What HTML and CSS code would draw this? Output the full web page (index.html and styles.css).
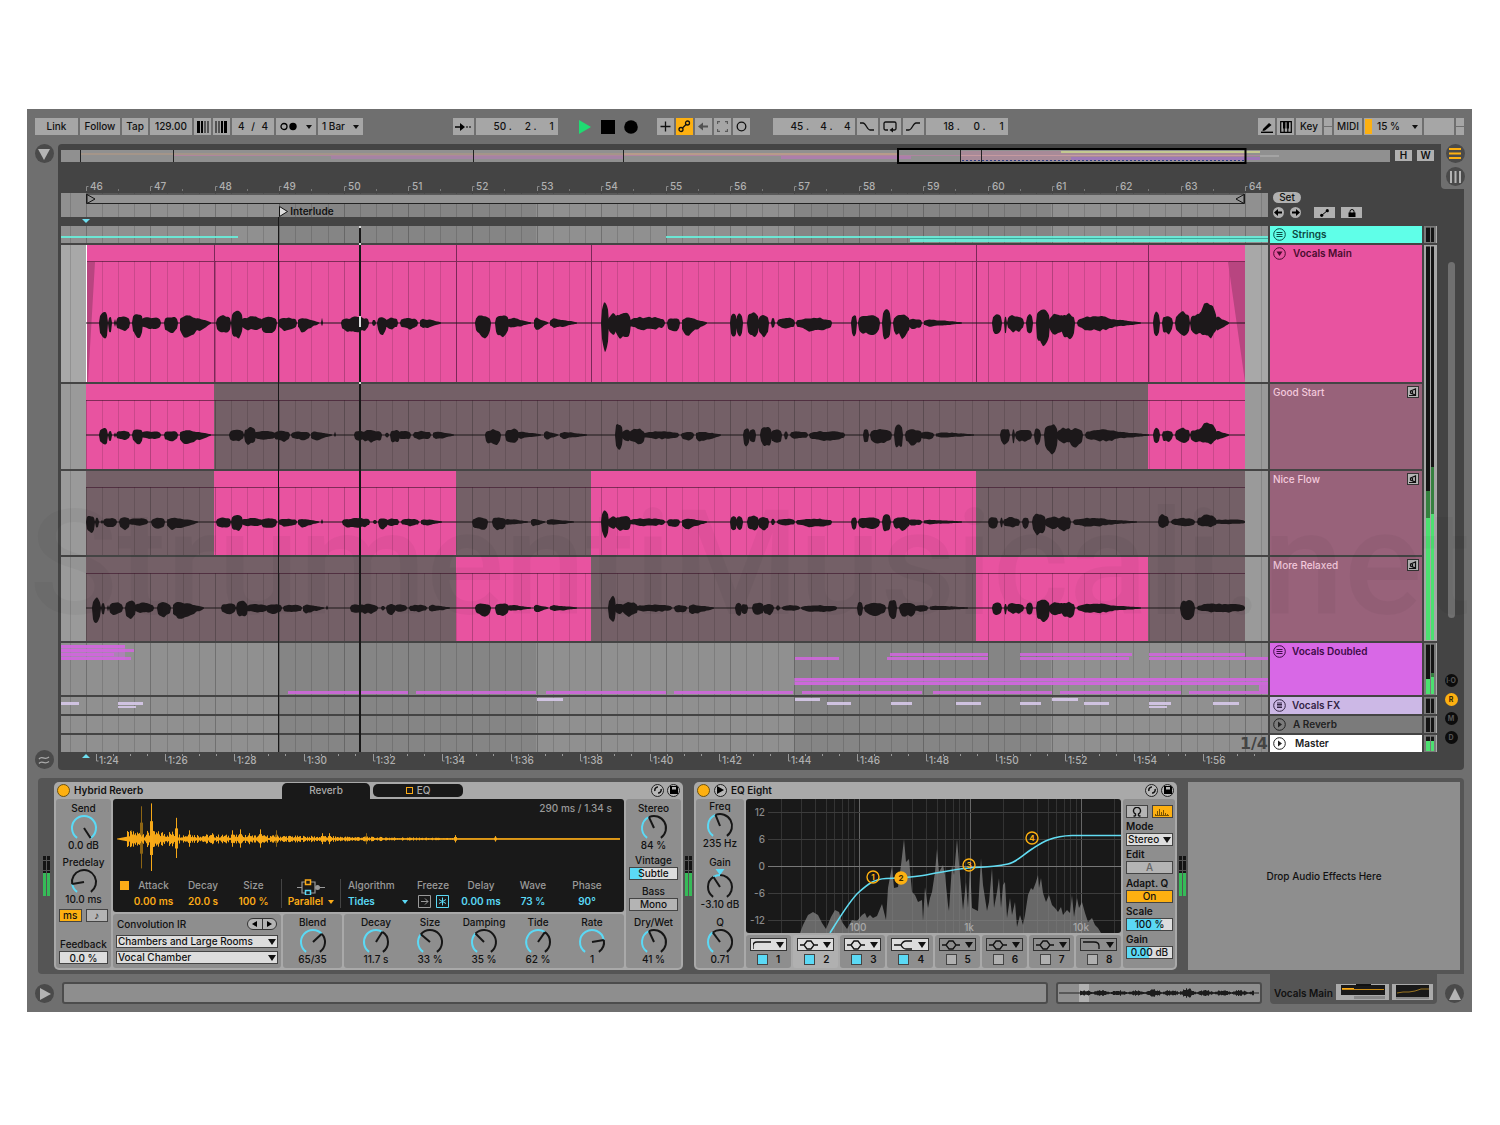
FILE: index.html
```html
<!DOCTYPE html>
<html lang="en">
<head>
<meta charset="utf-8">
<title>Live – Arrangement</title>
<link rel="stylesheet" href="styles.css">
</head>
<body>
<main class="app">
  <header class="toolbar">
    <div class="group">
      <button class="tb w44">Link</button>
      <button class="tb w40">Follow</button>
      <button class="tb w26">Tap</button>
      <button class="tb w42">129.00</button>
      <button class="tb w17" aria-label="Nudge down"><svg width="13" height="12"><path d="M1 0h3v12h-3zM5 0h2v12h-2zM8.500 0h1v12h-1zM11.500 0h1v12h-1z"/></svg></button>
      <button class="tb w17" aria-label="Nudge up"><svg width="13" height="12"><path d="M.5 0h1v12h-1zM3.500 0h1v12h-1zM6 0h2v12h-2zM9 0h3v12h-3z"/></svg></button>
      <button class="tb w42 spread"><span>4</span><span>/</span><span>4</span></button>
      <button class="tb w40 menu" aria-label="Metronome"><svg width="18" height="9"><circle cx="4" cy="4.500" r="3" fill="none" stroke="#000" stroke-width="1.300"/><circle cx="13" cy="4.500" r="3.700"/></svg><i class="caret"></i></button>
      <button class="tb w45 menu">1 Bar<i class="caret"></i></button>
    </div>
    <div class="space-a"></div>
    <div class="group">
      <button class="tb w21" aria-label="Follow playback"><svg width="16" height="10"><path d="M0 5h6" stroke="#000" stroke-width="1.500"/><path d="M5 1l5 4-5 4z"/><path d="M11 5h2M14 5h2" stroke="#000"/></svg></button>
      <button class="tb w82 spread pos"><span>50 .</span><span>2 .</span><span>1</span></button>
      <div class="transport">
        <button aria-label="Play"><svg width="14" height="16"><path d="M1 1l12 7-12 7z" fill="#1fdb72"/></svg></button>
        <button aria-label="Stop"><svg width="14" height="14"><path d="M0 0h14v14H0z"/></svg></button>
        <button aria-label="Record"><svg width="14" height="14"><circle cx="7" cy="7" r="6.800"/></svg></button>
      </div>
      <button class="tb w17" aria-label="Overdub"><svg class="line" width="11" height="11"><path d="M5.500 .5v10M.5 5.500h10"/></svg></button>
      <button class="tb w17 amber" aria-label="Automation arm"><svg class="line" width="13" height="13"><circle cx="3" cy="9.500" r="2"/><circle cx="9.500" cy="3" r="2"/><path d="M4.500 8l3.500-3.500"/></svg></button>
      <button class="tb w17 dim" aria-label="Re-enable automation"><svg width="11" height="9"><path d="M0 4.500l5-4v3h5v2h-5v3z"/></svg></button>
      <button class="tb w17 dim" aria-label="Capture"><svg class="line" width="11" height="11"><path d="M.5 3V.5H3M8 .5h2.500V3M10.500 8v2.500H8M3 10.500H.5V8"/></svg></button>
      <button class="tb w17" aria-label="Session record"><svg class="line" width="11" height="11"><circle cx="5.500" cy="5.500" r="4.300"/></svg></button>
      <div class="space-b"></div>
      <button class="tb w82 spread pos"><span>45 .</span><span>4 .</span><span>4</span></button>
      <button class="tb w21" aria-label="Punch in"><svg class="line" width="14" height="9"><path d="M0 1h3c3 0 4 7 7 7h4"/></svg></button>
      <button class="tb w21" aria-label="Loop"><svg class="line" width="14" height="12"><path d="M5 9H2.500a1.500 1.500 0 0 1-1.500-1.500v-5A1.500 1.500 0 0 1 2.500 1h9A1.500 1.500 0 0 1 13 2.500v5A1.500 1.500 0 0 1 11.500 9H8"/><path d="M10 6.500v5L6.500 9z" fill="#111" stroke="none"/></svg></button>
      <button class="tb w21" aria-label="Punch out"><svg class="line" width="14" height="9"><path d="M0 8h3c3 0 4-7 7-7h4"/></svg></button>
      <button class="tb w82 spread pos"><span>18 .</span><span>0 .</span><span>1</span></button>
    </div>
    <div class="space-c"></div>
    <div class="group">
      <button class="tb w17" aria-label="Draw mode"><svg width="12" height="12"><path d="M2 8l6-6 2.500 2L4 9.500 1.500 10z"/><path d="M0 11.300h12" stroke="#000" stroke-width="1.400"/></svg></button>
      <button class="tb w17" aria-label="Computer keyboard"><svg width="12" height="12"><path d="M.7.700h10.600v10.600H.7zM4.200 0v12M7.800 0v12" fill="none" stroke="#000" stroke-width="1.200"/><path d="M3 0h2.400v7.500H3zM6.600 0H9v7.500H6.600z"/></svg></button>
      <button class="tb w26">Key</button>
      <span class="leds"><i></i><i></i></span>
      <button class="tb w28">MIDI</button>
      <button class="tb w58 cpu"><b></b><span>15 %</span><i class="caret"></i></button>
      <span class="tb w30"></span>
      <span class="leds"><i></i><i></i></span>
    </div>
  </header>

  <div class="workspace">
    <nav class="rail">
      <button class="round" aria-label="Show browser"><svg width="12" height="12"><path d="M0 1h12L6 12z"/></svg></button>
      <button class="round" aria-label="Groove pool"><svg width="12" height="10"><path d="M1 4c3-4 5 2 10-2M1 8.500c3-4 5 2 10-2" fill="none" stroke="#aaa" stroke-width="1.300"/></svg></button>
    </nav>
    <section class="arrangement">
      <div class="overview-row">
        <svg id="overview" class="overview" viewBox="0 0 1329 12" preserveAspectRatio="none"></svg>
        <button class="mini">H</button>
        <button class="mini">W</button>
      </div>
      <div class="view-switch">
        <button class="round on" aria-label="Arrangement view"><svg width="12" height="11"><path d="M0 0h12v2H0zM0 4.500h12v2H0zM0 9h12v2H0z"/></svg></button>
        <button class="round" aria-label="Session view"><svg width="11" height="12"><path d="M0 0h2v12H0zM4.500 0h2v12h-2zM9 0h2v12H9z"/></svg></button>
      </div>
      <div id="bars" class="ruler bars"></div>
      <div class="scrub">
        <svg id="scrub" viewBox="0 0 1207 24" preserveAspectRatio="none"></svg>
        <span class="locator">Interlude</span>
      </div>
      <div class="marks"><i></i></div>
      <div class="set-box">
        <button class="pill">Set</button>
        <div class="set-row">
          <button class="dot" aria-label="Previous locator"><svg width="9" height="7"><path d="M0 3.500L4 0v2.500h4v2H4V7z"/></svg></button>
          <button class="dot" aria-label="Next locator"><svg width="9" height="7"><path d="M9 3.500L5 0v2.500H1v2h4V7z"/></svg></button>
          <button class="flat first" aria-label="Automation mode"><svg width="9" height="8"><path d="M1.500 6.500l6-5" stroke="#000"/><circle cx="1.700" cy="6.300" r="1.600"/><circle cx="7.300" cy="1.700" r="1.600"/></svg></button>
          <button class="flat" aria-label="Lock envelopes"><svg width="8" height="8"><path d="M.5 3.500h7V8h-7z"/><path d="M2 4V2.500a2 2 0 0 1 4 0V4" fill="none" stroke="#000"/></svg></button>
        </div>
      </div>

      <svg class="lane r1" data-lane="strings"></svg>
      <svg class="lane r2" data-lane="main"></svg>
      <svg class="lane r3" data-lane="good"></svg>
      <svg class="lane r4" data-lane="nice"></svg>
      <svg class="lane r5" data-lane="more"></svg>
      <svg class="lane r6" data-lane="doubled"></svg>
      <svg class="lane r7" data-lane="fx"></svg>
      <svg class="lane r8" data-lane="reverb"></svg>
      <svg class="lane r9" data-lane="master"></svg>
      <span class="zoom-grid">1/4</span>
      <div class="cursor insert"></div>
      <div class="cursor play"></div>

      <div class="head r1 strings"><svg class="fold" width="13" height="13"><circle cx="6.500" cy="6.500" r="5.800"/><path d="M3.500 4.500h6M3.500 6.500h6M3.500 8.500h6"/></svg>Strings</div>
      <div class="head r2 vocals"><svg class="fold" width="13" height="13"><circle cx="6.500" cy="6.500" r="5.800"/><path class="solid" d="M3.500 4.500h6l-3 4.500z"/></svg><span>Vocals Main</span></div>
      <div class="head r3 take">Good Start<button aria-label="Audition Good Start"><svg width="8" height="8"><path d="M1.500 3L6.500 1v6L1.500 5zM3.500 2v4M0 7.500h7" fill="none" stroke="#111" stroke-width="1.200"/></svg></button></div>
      <div class="head r4 take">Nice Flow<button aria-label="Audition Nice Flow"><svg width="8" height="8"><path d="M1.500 3L6.500 1v6L1.500 5zM3.500 2v4M0 7.500h7" fill="none" stroke="#111" stroke-width="1.200"/></svg></button></div>
      <div class="head r5 take">More Relaxed<button aria-label="Audition More Relaxed"><svg width="8" height="8"><path d="M1.500 3L6.500 1v6L1.500 5zM3.500 2v4M0 7.500h7" fill="none" stroke="#111" stroke-width="1.200"/></svg></button></div>
      <div class="head r6 doubled"><svg class="fold" width="13" height="13"><circle cx="6.500" cy="6.500" r="5.800"/><path d="M3.500 4.500h6M3.500 6.500h6M3.500 8.500h6"/></svg>Vocals Doubled</div>
      <div class="head r7 fx"><svg class="fold" width="13" height="13"><circle cx="6.500" cy="6.500" r="5.800"/><path d="M4 4h5M4 5.500h5M4 7h5M4 8.500h5"/></svg>Vocals FX</div>
      <div class="head r8 ret"><svg class="fold" width="13" height="13"><circle cx="6.500" cy="6.500" r="5.800"/><path class="solid" d="M5 3.500v6l4-3z"/></svg><span>A Reverb</span></div>
      <div class="head r9 master"><svg class="fold" width="13" height="13"><circle cx="6.500" cy="6.500" r="5.800"/><path class="solid" d="M5 3.500v6l4-3z"/></svg><span>Master</span></div>

      <div class="meter r1"><i></i><i></i></div>
      <div class="meter comp"><i><u style="height:38%"></u><b style="height:31%"></b></i><i><u style="height:44%"></u><b style="height:32%"></b></i></div>
      <div class="meter r6"><i><b style="height:30%"></b></i><i><u style="height:42%"></u><b style="height:34%"></b></i></div>
      <div class="meter r7"><i></i><i></i></div>
      <div class="meter r8"><i></i><i></i></div>
      <div class="meter r9"><i><b style="height:70%"></b></i><i><b style="height:70%"></b></i></div>

      <div class="side">
        <div class="scrollbar"></div>
        <button>I·O</button>
        <button class="lit">R</button>
        <button>M</button>
        <button>D</button>
      </div>
      <div id="times" class="ruler times"></div>
    </section>
  </div>

  <section class="chain">
    <div class="level"><i></i><i></i></div>

    <article class="device reverb">
      <header class="title">
        <button class="power" aria-label="Device on"></button>
        <h2>Hybrid Reverb</h2>
        <button class="tab current">Reverb</button>
        <button class="tab other"><i></i>EQ</button>
        <span class="tools">
          <button class="ring" aria-label="Hot swap"><svg width="8" height="8"><path d="M1 5A3 3 0 0 1 4 1M7 3A3 3 0 0 1 4 7" fill="none" stroke="#111" stroke-width="1.500"/></svg></button>
          <button class="ring" aria-label="Save preset"><svg width="8" height="8"><path fill-rule="evenodd" d="M0 0h7l1 1v7H0zM2 1v2.500h4V1z"/></svg></button>
        </span>
      </header>
      <div class="card col-left">
        <div class="knob" data-label="Send" data-angle="147" data-value="0.0 dB"></div>
        <div class="knob-group">
          <div class="knob" data-label="Predelay" data-angle="-100" data-value="10.0 ms"></div>
          <div class="pair"><button class="box amber">ms</button><button class="box">♪</button></div>
        </div>
        <label class="field">Feedback<input value="0.0 %"></label>
      </div>
      <div class="screen">
        <span class="decay-info">290 ms / 1.34 s</span>
        <svg id="impulse" class="impulse" viewBox="0 0 503 78" preserveAspectRatio="none"></svg>
        <div class="params">
          <i class="sq"></i>
          <div><span>Attack</span><b>0.00 ms</b></div>
          <div><span>Decay</span><b>20.0 s</b></div>
          <div><span>Size</span><b>100 %</b></div>
          <div class="routing"><svg width="30" height="17"><path d="M1 8.500h5M6 3v11h13V3zM19 8.500h10" fill="none" stroke="#999" stroke-width="1.200"/><circle cx="21.500" cy="8.500" r="2.500" fill="#999"/><path d="M9.500 1h5v4.500h-5z" fill="#191919" stroke="#fbab17" stroke-width="1.500"/><path d="M9.500 11.500h5V16h-5z" fill="#191919" stroke="#5bd9f5" stroke-width="1.500"/></svg><b>Parallel <i class="caret"></i></b></div>
          <div class="algo"><span>Algorithm</span><b>Tides <i class="caret"></i></b></div>
          <div class="blue"><span>Freeze</span><b class="icons"><svg width="13" height="13"><path d="M.5.500h12v12H.5zM3 6.500h7M7 3.500l3 3-3 3" fill="none" stroke="#999"/></svg><svg width="13" height="13"><path d="M.5.500h12v12H.5zM6.500 2.500v8M3 4.500l7 4M10 4.500l-7 4" fill="none" stroke="#5bd9f5"/></svg></b></div>
          <div class="blue"><span>Delay</span><b>0.00 ms</b></div>
          <div class="blue"><span>Wave</span><b>73 %</b></div>
          <div class="blue"><span>Phase</span><b>90°</b></div>
        </div>
      </div>
      <div class="lower">
        <div class="card ir">
          <div class="ir-head"><span>Convolution IR</span><span class="stepper"><button aria-label="Previous"><svg width="5" height="6"><path d="M5 0v6L0 3z"/></svg></button><button aria-label="Next"><svg width="5" height="6"><path d="M0 0v6l5-3z"/></svg></button></span></div>
          <div class="select"><select aria-label="Category"><option>Chambers and Large Rooms</option></select></div>
          <div class="select"><select aria-label="Impulse"><option>Vocal Chamber</option></select></div>
        </div>
        <div class="card blend"><div class="knob" data-label="Blend" data-angle="47" data-value="65/35"></div></div>
        <div class="card algo-knobs">
          <div class="knob" data-label="Decay" data-angle="32" data-value="11.7 s"></div>
          <div class="knob" data-label="Size" data-angle="-50" data-value="33 %"></div>
          <div class="knob" data-label="Damping" data-angle="-45" data-value="35 %"></div>
          <div class="knob" data-label="Tide" data-angle="35" data-value="62 %"></div>
          <div class="knob" data-label="Rate" data-angle="80" data-value="1"></div>
        </div>
      </div>
      <div class="card col-right">
        <div class="knob" data-label="Stereo" data-angle="-25" data-value="84 %"></div>
        <div class="opts">
          <div class="opt"><span>Vintage</span><button class="box subtle">Subtle</button></div>
          <div class="opt"><span>Bass</span><button class="box">Mono</button></div>
        </div>
        <div class="knob" data-label="Dry/Wet" data-angle="-25" data-value="41 %"></div>
      </div>
    </article>

    <div class="level"><i></i><i></i></div>

    <article class="device eq">
      <header class="title">
        <button class="power" aria-label="Device on"></button>
        <button class="ring" aria-label="Expand"><svg width="7" height="8"><path d="M0 0l7 4-7 4z"/></svg></button>
        <h2>EQ Eight</h2>
        <span class="tools">
          <button class="ring" aria-label="Hot swap"><svg width="8" height="8"><path d="M1 5A3 3 0 0 1 4 1M7 3A3 3 0 0 1 4 7" fill="none" stroke="#111" stroke-width="1.500"/></svg></button>
          <button class="ring" aria-label="Save preset"><svg width="8" height="8"><path fill-rule="evenodd" d="M0 0h7l1 1v7H0zM2 1v2.500h4V1z"/></svg></button>
        </span>
      </header>
      <div class="card col-left">
        <div class="knob" data-label="Freq" data-angle="-22" data-value="235 Hz"></div>
        <div class="knob bipolar" data-label="Gain" data-angle="-33" data-value="-3.10 dB"></div>
        <div class="knob" data-label="Q" data-angle="-37" data-value="0.71"></div>
      </div>
      <svg id="eq" class="screen eq-screen" viewBox="0 0 375 134"></svg>
      <div id="bands" class="bands"></div>
      <div class="card col-right">
        <div class="pair"><button class="box" aria-label="Audition"><svg class="line" width="10" height="10"><path d="M3.500 9V7A3.500 3.500 0 1 1 6.500 7V9M1.500 9h2M6.500 9h2" stroke-width="1.400"/></svg></button><button class="box amber" aria-label="Analyzer"><svg width="14" height="8"><path d="M0 8V6h1v2zM2 8V3h1v5zM4 8V1h1v7zM6 8V4h1v4zM8 8V2h1v6zM10 8V5h1v3zM12 8V6h1v2zM0 7h14v1H0z" fill="#7a5200"/></svg></button></div>
        <label class="opt">Mode<span class="select"><select><option>Stereo</option></select></span></label>
        <div class="opt"><span>Edit</span><button class="box off">A</button></div>
        <div class="opt"><span>Adapt. Q</span><button class="box amber">On</button></div>
        <label class="opt">Scale<input class="fill78" value="100 %"></label>
        <label class="opt">Gain<input class="fill50" value="0.00 dB"></label>
      </div>
    </article>

    <div class="level"><i></i><i></i></div>
    <div class="drop">Drop Audio Effects Here</div>
  </section>

  <footer class="status">
    <button class="round" aria-label="Show help"><svg width="12" height="12"><path d="M1 0v12l11-6z"/></svg></button>
    <div class="info"></div>
    <svg id="clipview" class="clipview" viewBox="0 0 202 17" preserveAspectRatio="none"></svg>
    <div class="track-tab"><span>Vocals Main</span>
      <svg width="54" height="16"><path d="M0 0h54v16H0z" fill="#aaa"/><path d="M5 1h44v10H5z" fill="#191919"/><path d="M20 0h15v2H20z" fill="#111"/><path d="M6 5.500h42" stroke="#c98a14"/><path d="M6 4.500h12" stroke="#fbab17"/><path d="M18 12h31v3H18z" fill="#888"/></svg>
      <svg width="42" height="16"><path d="M0 0h42v16H0z" fill="#aaa"/><path d="M4 1h33v12H4z" fill="#191919"/><path d="M5 9l6-1 6 0 6-1 6-2 8 0" fill="none" stroke="#9a7420"/><path d="M4 14h33" stroke="#666"/></svg>
    </div>
    <button class="round" aria-label="Hide detail"><svg width="12" height="12"><path d="M6 0l6 12H0z"/></svg></button>
  </footer>
</main>
<div class="watermark" aria-hidden="true">StrumentiMusicali.net</div>
<script src="script.js"></script>
</body>
</html>
```

FILE: styles.css
```css
* { box-sizing: border-box; }
body {
  margin: 0;
  padding: 109px 28px 113px 27px;
  position: relative;
  background: #fff;
  color: #111;
  font: 500 10px/13px Inter, "Liberation Sans", sans-serif;
}
button, input, select {
  margin: 0; padding: 0; border: 0; border-radius: 0;
  font: inherit; color: inherit; background: none;
}
h2 { margin: 0; font: inherit; font-weight: 600; }
svg { display: block; }
svg.line { fill: none; stroke: #111; stroke-width: 1.3; }
.caret { border: 3px solid transparent; border-top: 4px solid currentColor; border-bottom: 0; width: 0; flex: none; }

.app { background: #6f6f6f; min-width: 1380px; }

/* control bar */
.toolbar { display: flex; height: 35px; padding: 9px 8px; }
.group { display: flex; gap: 2px; }
.space-a { flex: 89; }
.space-c { flex: 249; }
.space-b { width: 19px; }
.tb { height: 17px; background: #a6a6a6; display: flex; align-items: center; justify-content: center; white-space: nowrap; }
.w17 { width: 17px; } .w21 { width: 21px; } .w26 { width: 26px; } .w28 { width: 28px; } .w30 { width: 30px; }
.w40 { width: 40px; } .w42 { width: 42px; } .w44 { width: 43px; } .w45 { width: 45px; } .w58 { width: 58px; } .w82 { width: 82px; }
.spread { justify-content: space-between; padding: 0 6px; }
.pos { padding: 0 4px 0 18px; }
.menu { justify-content: space-between; padding: 0 4px; }
.amber { background: #fdb011; }
.dim svg { opacity: .5; }
.transport { display: flex; align-items: center; gap: 9px; margin: 0 17px 0 18px; }
.leds { display: flex; flex-direction: column; gap: 1px; width: 8px; height: 17px; }
.leds i { flex: 1; background: #a6a6a6; }
.cpu { justify-content: flex-start; gap: 5px; padding: 0 4px 0 1px; }
.cpu b { width: 7px; height: 15px; background: #fdb011; }
.cpu .caret { margin-left: auto; }

/* arrangement */
.workspace { display: flex; padding-right: 8px; }
.rail { width: 31px; display: flex; flex-direction: column; align-items: center; justify-content: space-between; padding: 0 0 1px 3px; }
.round { width: 19px; height: 19px; border-radius: 50%; background: #4a4a4a; display: flex; align-items: center; justify-content: center; fill: #b4b4b4; flex: none; }
.round.on { fill: #fdb011; }
.arrangement {
  flex: 1; min-width: 0; position: relative;
  display: grid; gap: 2px;
  grid-template-columns: minmax(0, 1fr) 152px 13px 25px;
  grid-template-rows: 19px 26px 24px 5px 17px 137px 85px 84px 84px 52px 17px 17px 17px 16px;
  padding-left: 3px; background: #444; border-radius: 4px 0 4px 4px;
}
.overview-row { grid-area: 1 / 1 / 2 / 4; display: flex; gap: 5px; padding: 6px 3px 0 0; align-items: flex-start; }
.overview { flex: 1; min-width: 0; height: 12px; overflow: visible; }
.mini { width: 17px; height: 11px; background: #b0b0b0; line-height: 11px; font-weight: 600; }
.view-switch { grid-area: 1 / 4 / 3 / 5; margin-left: 2px; height: 45px; background: #6f6f6f; border-bottom-left-radius: 4px; display: flex; flex-direction: column; align-items: center; gap: 4px; padding-left: 5px; }
.ruler { position: relative; color: #b0b0b0; }
.ruler svg { position: absolute; inset: 0; width: 100%; height: 100%; }
.ruler span { position: absolute; white-space: nowrap; }
.bars { grid-area: 2 / 1; }
.bars span { top: 15px; margin-left: 4px; }
.times { grid-area: 14 / 1; }
.times span { top: 0; margin-left: 3px; }
.scrub { grid-area: 3 / 1; position: relative; }
.scrub svg { width: 100%; height: 24px; }
.locator { position: absolute; left: 19%; top: 12px; font-weight: 600; }
.marks { grid-area: 4 / 1; padding-left: 2%; }
.marks i { display: block; width: 0; margin-left: -3px; border: 4px solid transparent; border-top: 4px solid #6fdff0; border-bottom: 0; }
.set-box { grid-area: 3 / 2 / 5 / 3; padding-left: 3px; }
.pill { display: block; width: 28px; height: 11px; margin-top: -1px; border-radius: 6px; background: #b0b0b0; line-height: 11px; }
.set-row { display: flex; gap: 6px; margin-top: 4px; align-items: center; }
.dot, .flat { height: 11px; background: #b0b0b0; display: flex; align-items: center; justify-content: center; }
.dot { width: 11px; border-radius: 50%; }
.flat { width: 21px; }
.flat.first { margin-left: 7px; }

.lane { grid-column: 1; width: 100%; height: 100%; min-width: 0; }
.r1 { grid-row: 5; } .r2 { grid-row: 6; } .r3 { grid-row: 7; } .r4 { grid-row: 8; } .r5 { grid-row: 9; }
.r6 { grid-row: 10; } .r7 { grid-row: 11; } .r8 { grid-row: 12; } .r9 { grid-row: 13; }
.zoom-grid { grid-area: 13 / 1; justify-self: end; font: 700 16px/17px "DejaVu Sans", sans-serif; color: #444; }
.cursor { grid-column: 1; width: 2px; background: #181818; }
.insert { grid-row: 3 / 14; margin: 12px 0 0 18%; width: 1px; }
.play { grid-row: 5 / 14; margin-left: 24.7%; background: linear-gradient(#ddd 0 2px, #181818 2px 17px, #ddd 17px 19px, #181818 19px 90px, #ddd 90px 101px, #181818 101px 156px, #ddd 156px 158px, #181818 158px); }

.head { grid-column: 2; display: flex; align-items: flex-start; gap: 6px; padding: 2px 3px; font-weight: 600; color: #222; }
.fold { fill: none; stroke: currentColor; flex: none; }
.fold .solid { fill: currentColor; stroke: none; }
.strings { background: #5fffe8; color: #0c4a44; }
.vocals { background: #e853a0; color: #4a0c2e; }
.take { background: #98627a; color: #f3c9dc; justify-content: space-between; font-weight: 500; line-height: 12px; }
.take button { width: 12px; height: 12px; background: #b4b4b4; border: 1px solid #333; display: flex; align-items: center; justify-content: center; }
.doubled { background: #d868e6; color: #3d0c46; }
.fx { background: #ccb8e6; color: #332444; }
.ret { background: #7b7b7b; }
.master { background: #fff; }
.head span { padding-left: 1px; }
.master span { padding-left: 3px; }

.meter { grid-column: 3; display: flex; gap: 1px; padding: 1px 2px; background: #7a7a7a; border-right: 1px solid #aaa; }
.meter i { flex: 1; background: #141414; position: relative; border-top: 1px solid #555; }
.meter b, .meter u { position: absolute; left: 0; right: 0; bottom: 0; }
.meter u { background: #35803f; }
.meter b { background: #4ce070; }
.comp { grid-row: 6 / 10; background: #a6a6a6; }
.side { grid-area: 5 / 4 / 14 / 5; display: flex; flex-direction: column; align-items: center; gap: 6px; padding: 36px 1px 8px 0; }
.scrollbar { width: 7px; flex: 1; margin-bottom: 50px; border-radius: 4px; background: #707070; }
.side button { width: 13px; height: 13px; border-radius: 50%; background: #0c0c0c; color: #555; font-size: 7px; line-height: 13px; font-weight: 700; }
.side .lit { background: #fdb011; color: #3a2800; }

/* device chain */
.chain { display: grid; grid-template-columns: 16px 629px 11px 483px 11px minmax(0, 1fr); margin: 8px 8px 0 11px; padding: 4px 4px 4px 0; background: #555; border-radius: 4px 4px 0 4px; }
.level { display: flex; gap: 1px; justify-content: center; padding-top: 74px; }
.level i { width: 3px; height: 40px; background: linear-gradient(#141414 4px, #555 4px 5px, #141414 5px 14px, #555 14px 15px, #141414 15px 17px, #36bb58 17px); }
.device { display: grid; height: 188px; padding: 0 2px 2px; gap: 2px; border-radius: 5px; background: #a9a9a9; }
.reverb { grid-template: 15px 113px 54px / 55px 511px 55px; }
.eq { grid-template: 15px 134px 33px / 48px 375px minmax(0, 1fr); }
.title { grid-column: 1 / -1; display: flex; align-items: center; gap: 4px; padding: 1px 0 0 1px; }
.power { width: 13px; height: 13px; border-radius: 50%; background: #fdb011; border: 1px solid #6a5010; }
.title h2 { width: 207px; }
.eq .title h2 { width: auto; }
.tab { border-radius: 5px; background: #191919; color: #aaa; display: flex; gap: 4px; align-items: center; justify-content: center; align-self: flex-start; height: 13px; }
.current { width: 88px; height: 16px; padding-bottom: 2px; border-radius: 5px 5px 0 0; margin-left: -3px; }
.other { width: 90px; margin-left: -1px; margin-top: 1px; }
.other i { width: 7px; height: 7px; border: 1px solid #fbab17; }
.tools { margin-left: auto; display: flex; gap: 3px; padding-right: 1px; }
.ring { width: 13px; height: 13px; border-radius: 50%; border: 1px solid #222; background: #b8b8b8; display: flex; align-items: center; justify-content: center; }
.card { background: #8e8e8e; border-radius: 3px; text-align: center; }
.col-left { grid-column: 1; grid-row: 2 / 4; display: flex; flex-direction: column; justify-content: space-between; padding: 3px 3px 4px; }
.col-right { grid-column: 3; grid-row: 2 / 4; display: flex; flex-direction: column; justify-content: space-between; padding: 3px 3px 2px; }
.knob { display: flex; flex-direction: column; align-items: center; white-space: nowrap; }
.dial { position: relative; width: 28px; height: 24px; }
.dial svg { overflow: visible; }
.dial input { position: absolute; inset: 0; width: 28px; height: 24px; opacity: 0; }
.bipolar .dial { margin-top: 5px; }
.box, .field input, .opt input, .select select {
  display: flex; align-items: center; justify-content: center;
  height: 13px; width: 100%; border: 1px solid #444; background: #b4b4b4; text-align: center; line-height: 11px;
}
.amber.box { background: #fdb011; }
.pair { display: flex; gap: 4px; }
.knob-group .pair { margin: 3px 0 12px; }
.field input { display: block; background: #ddd; }
.opt, .opt span { display: block; }
.opts { display: grid; gap: 5px; padding-bottom: 3px; }
.subtle { background: linear-gradient(90deg, #5bd9f5 25%, #ddd 25%); }
.box.off { color: #666; }
.select { position: relative; display: block; }
.select select { appearance: none; display: block; background: #ddd; text-align: left; padding: 0 1px; }
.select::after { content: ""; position: absolute; right: 2px; top: 4px; border: 4px solid transparent; border-top: 6px solid #111; border-bottom: 0; pointer-events: none; }
.screen { background: #191919; border-radius: 3px; color: #9a9a9a; }
.reverb > .screen { grid-column: 2; grid-row: 2; padding: 2px 4px 0; display: flex; flex-direction: column; position: relative; }
.decay-info { position: absolute; right: 12px; top: 3px; }
.impulse { width: 100%; height: 75px; }
.params { display: grid; grid-template-columns: 9px 49px 50px 51px 62px 69px 46px 50px 54px 54px; margin: 3px -4px 0 3px; height: 31px; }
.params div { display: flex; flex-direction: column; align-items: center; justify-content: space-between; height: 29px; white-space: nowrap; }
.params b { color: #fbab17; font-weight: 600; display: flex; align-items: center; gap: 5px; }
.params .blue b, .algo b { color: #5bd9f5; }
.params .routing { border: solid #444; border-width: 0 1px; margin-left: 2px; }
.params .algo { align-items: stretch; padding: 0 2px 0 7px; }
.algo b { justify-content: space-between; }
.params .algo .caret { margin-right: 0; }
.params .icons { height: 13px; }
.sq { width: 9px; height: 9px; background: #fbab17; margin-top: 2px; }
.lower { grid-column: 2; grid-row: 3; display: grid; grid-template-columns: 168px 59px 1fr; gap: 2px; }
.lower .card { padding: 2px 0; }
.lower .ir { padding: 4px 3px; text-align: left; display: flex; flex-direction: column; justify-content: space-between; }
.ir-head { display: flex; justify-content: space-between; padding: 0 1px; }
.stepper { display: flex; width: 30px; height: 12px; border: 1px solid #333; border-radius: 6px; background: #b4b4b4; }
.stepper button { flex: 1; display: flex; align-items: center; justify-content: center; }
.stepper button + button { border-left: 1px solid #333; }
.algo-knobs { display: grid; grid-template-columns: repeat(5, 54px); justify-content: center; }
.eq .col-left { padding: 1px 0 2px; }
.eq .col-right { padding: 6px 2px 9px 3px; text-align: left; font-weight: 600; }
.eq .col-right .box, .eq .col-right input, .eq .col-right select { font-weight: 500; }
.opt .fill78 { background: linear-gradient(90deg, #5bd9f5 75%, #ddd 75%); }
.opt .fill50 { background: linear-gradient(90deg, #5bd9f5 50%, #ddd 50%); }
.eq-screen { grid-column: 2; grid-row: 2; width: 375px; height: 134px; font-size: 10px; }
.bands { grid-column: 2; grid-row: 3; display: grid; grid-template-columns: repeat(8, 1fr); gap: 2px; }
.band { background: #8e8e8e; border-radius: 3px; padding: 3px 4px 2px; display: flex; flex-direction: column; justify-content: space-between; }
.band.sel { background: #b0b0b0; }
.band button { height: 13px; border: 1px solid #333; background: #ddd; display: flex; align-items: center; justify-content: space-between; padding: 0 2px; }
.band.off button { background: #8e8e8e; }
.band label { display: flex; gap: 8px; padding-left: 7px; align-items: center; font-weight: 600; }
.band input { appearance: none; width: 11px; height: 11px; border: 1px solid #444; background: #b0b0b0; }
.band input:checked { background: #5bd9f5; }
.band .caret { border-width: 6px 4px 0; }
.drop { background: #8e8e8e; display: flex; align-items: center; justify-content: center; }

/* status bar */
.status { display: flex; align-items: flex-start; gap: 8px; height: 38px; padding: 0 8px; }
.status .round { margin-top: 10px; }
.info, .clipview { height: 22px; margin-top: 8px; border: 2px solid #4c4c4c; border-radius: 3px; background: #8e8e8e; }
.info { flex: 1; }
.clipview { width: 206px; }
.track-tab { display: flex; align-items: flex-end; gap: 3px; width: 167px; height: 30px; padding: 0 4px 4px; background: #555; border-radius: 0 0 4px 4px; font-weight: 600; white-space: nowrap; }
.track-tab span { flex: 1; }

.watermark { position: absolute; left: 0; right: 0; top: 490px; height: 150px; overflow: hidden; text-align: center; font: 500 146px/150px Roboto, sans-serif; color: rgba(0, 0, 0, .035); white-space: nowrap; pointer-events: none; }
```

FILE: script.js
```js
const BAR = 64.4, START = 25, END = 1184, WIDTH = 1207;

// Repeatable noise so that the waveforms keep their shape between loads.
const noise = n => { const s = Math.sin(n * 12.9898) * 43758.5453; return s - Math.floor(s); };
const smooth = n => { const k = Math.floor(n / 3), f = n / 3 - k; return noise(k) * (1 - f) + noise(k + 1) * f; };

// Sung phrases: [from, to, peak above, peak below, decays]
const phrases = {
  a: [[38,47,13,19],[47,51,7,10],[53,55,4,4],[55,69,7,9],[71,82,9,16],[80,100,6,6],[103,117,7,11],[119,150,10,18,1]],
  b: [[155,170,8,10],[170,182,12,16],[180,202,6,7],[200,216,6,11],[217,236,5,8],[237,258,6,11,1],[260,262,5,3]],
  c: [[280,292,5,8],[286,308,6,10],[311,315,3,3],[316,326,6,11],[324,337,5,6],[339,357,5,6],[359,380,5,7,1]],
  d: [[414,430,8,16],[434,448,9,14],[446,470,6,6,1],[473,487,6,9,1],[489,516,5,6,1]],
  e: [[540,548,23,29],[547,556,9,12],[554,570,11,18],[568,604,6,7],[606,619,5,9],[621,646,7,16,1]],
  f: [[669,676,10,17],[675,682,9,13],[686,698,12,17],[697,708,8,15],[710,714,5,6],[716,734,5,5],[735,771,5,8]],
  g: [[790,796,9,13],[797,819,8,13,],[821,830,15,21],[832,849,8,15],[847,861,4,6],[863,901,4,4,1]],
  h: [[931,941,9,14],[943,946,8,12],[946,963,8,10],[965,972,9,14],[975,989,16,26],[988,1004,10,12],[1000,1014,10,18],[1016,1052,7,8],[1040,1080,5,6,1]],
  i: [[1092,1099,11,12],[1101,1112,8,12],[1114,1129,12,13],[1129,1148,10,12],[1137,1156,19,16],[1154,1168,8,10,1]],
  niceEnd: [[1097,1108,14,10],[1110,1134,7,7],[1136,1156,12,9],[1150,1184,4,3]],
  moreEnd: [[1119,1134,14,20],[1136,1184,7,7]]
};

function wave(parts, mid) {
  let d = '';
  for (const [name, dx, gain] of parts) {
    for (const [x0, x1, up, down, decays] of phrases[name]) {
      const top = [], bottom = [], w = x1 - x0;
      for (let k = 0; k <= w; k++) {
        const t = k / w;
        const env = decays
          ? Math.min(1, .4 + t * 4) * Math.pow(1 - t, .9)
          : Math.pow(Math.max(0, Math.sin(Math.PI * t)), .35);
        const x = x0 + k + dx;
        top.push([x, mid - .6 - up * gain * env * (1.05 - .35 * smooth(x))]);
        bottom.unshift([x, mid + .6 + down * gain * env * (1.05 - .4 * smooth(x + 50))]);
      }
      d += 'M' + top.concat(bottom).map(p => p[0].toFixed(1) + ' ' + p[1].toFixed(1)).join('L') + 'Z';
    }
  }
  return `<path d="${d}" fill="#1c181a"/><path d="M${START} ${mid}H${END}" stroke="#1c181a"/>`;
}

const rect = (x, y, x1, y1, fill, extra = '') => `<rect x="${x}" y="${y}" width="${x1 - x}" height="${y1 - y}" fill="${fill}" ${extra}/>`;

function grid(h, top = 0, from = 0, to = WIDTH) {
  let s = '';
  for (let k = -1; k <= 73; k++) {
    const x = Math.round(START + k * BAR / 4) + .5;
    if (x < from || x > to) continue;
    s += `<path d="M${x} ${top}V${h}" stroke="#000" stroke-opacity="${k % 4 ? .13 : .22}"/>`;
  }
  return s;
}

const empty = h => rect(0, 0, WIDTH, h, '#909090') + rect(218, 0, 475, h, '#858585') + rect(733, 0, 990, h, '#858585') + grid(h);
const notes = (list, fill) => list.map(([x, x1, y, y1]) => rect(x, y, x1, y1, fill, 'opacity=".85"')).join('');

const PINK = '#e853a0', MUTED = '#746067';
function take(h, mid, clips, parts, edge) {
  const whole = edge === '#a8a8a8';
  let s = rect(0, 0, WIDTH, h, edge) + rect(START, 0, END, h, MUTED);
  for (const [x, x1] of clips) s += rect(x, 0, x1, h, PINK);
  s += grid(h, 16, START, END) + grid(h, 0, END + 2, WIDTH) + grid(h, 0, 0, START - 1);
  s += `<path d="M${START} 16.500H${END}" stroke="#3a1028" stroke-opacity=".6"/>`;
  if (whole) {
    s += `<path d="M25 17h9L27 ${h}h-2zM1167 17h17V${h}z" fill="#b84580"/><path d="M25.500 0V${h}" stroke="#fff"/>`;
    for (const x of [153.500, 395.500, 530.500, 915.500, 1087.500]) s += `<path d="M${x} 0V${h}" stroke="#7c2858"/>`;
  }
  return s + wave(parts, mid);
}

const lanes = {
  strings: [17, h => empty(h) + notes([[0,177,10,12],[605,1207,10,12],[849,1207,12,16]], '#66f6e0') + '<path d="M849 12.500H1207" stroke="#3fa89a"/>'],
  main: [137, h => take(h, 78, [[25,1184]], [...'abcdefghi'].map(p => [p, 0, 1]), '#a8a8a8')],
  good: [85, h => take(h, 51, [[25,153],[1087,1184]], [['a',0,.6],['b',13,.6],['c',13,.75],['d',10,.65],['e',14,.55],['f',13,.7],['g',12,.7],['h',8,.75],['i',0,.6]], '#9a9a9a')],
  nice: [84, h => take(h, 51, [[153,395],[530,915]], [['a',-13,.55],['b',0,.55],['c',1,.6],['d',-3,.55],['e',0,.55],['f',0,.58],['g',0,.55],['h',-4,.55],['niceEnd',0,.55]], '#9a9a9a')],
  more: [84, h => take(h, 51, [[395,530],[915,1087]], [['a',-7,.8],['b',5,.55],['c',9,.6],['d',0,.55],['e',7,.5],['f',5,.45],['g',6,.6],['h',0,.6],['moreEnd',0,.6]], '#9a9a9a')],
  doubled: [52, h => empty(h) + rect(0, 2, 64, 17, '#b87cc4', 'opacity=".7"') + rect(733, 35, 1207, 42, '#b87cc4', 'opacity=".7"') + notes([
    [0,64,2,5],[0,73,6,9],[0,53,10,13],[0,70,14,17],
    [227,347,48,51],[355,475,48,51],[485,605,48,51],[613,732,48,51],[741,861,48,51],[872,991,48,51],[999,1120,48,51],[1128,1207,48,51],
    [734,778,14,17],[826,927,14,17],[829,927,10,13],[959,1071,10,13],[959,1068,14,17],[1088,1184,10,13],[1088,1207,14,17],
    [734,1207,35,38],[734,1207,39,42],[1198,1207,42,48]], '#d265df')],
  fx: [17, h => empty(h) + notes([
    [0,18,5,8],[57,82,5,8],[57,75,9,11],[476,502,1,4],[734,759,1,4],[766,790,5,8],[830,851,5,8],[895,920,5,8],[959,980,5,8],
    [991,1017,1,4],[1023,1048,5,8],[1088,1110,5,8],[1088,1106,9,11],[1152,1178,5,8]], '#dccdf0')],
  reverb: [17, empty],
  master: [17, empty]
};
document.querySelectorAll('[data-lane]').forEach(svg => {
  const [h, draw] = lanes[svg.dataset.lane];
  svg.setAttribute('viewBox', `0 0 ${WIDTH} ${h}`);
  svg.setAttribute('preserveAspectRatio', 'none');
  svg.innerHTML = draw(h);
});

// Song overview
{
  let s = rect(0, 0, 1329, 12, '#909090');
  s += rect(20, 3, 562, 5, '#b39a86', 'opacity=".6"') + rect(113, 5, 1199, 6, '#c480a8', 'opacity=".6"');
  s += rect(270, 6, 562, 9, '#b878b8', 'opacity=".5"') + rect(562, 3, 836, 5, '#c8a088', 'opacity=".7"');
  s += rect(720, 6, 850, 9, '#b878b8', 'opacity=".7"') + rect(900, 1, 1184, 11, '#a88a98') + rect(900, 5, 1184, 6, '#c79aa0');
  s += rect(1010, 7, 1199, 10, '#9d78b8') + rect(1000, 1, 1199, 3, '#c4c890') + rect(1199, 5, 1218, 7, '#a4a4a4');
  s += '<path d="M901 10.500H1184" stroke="#2a3c80" stroke-dasharray="2 2"/>';
  for (const x of [19.500, 112.500, 412.500, 562.500, 899.500, 920.500]) s += `<path d="M${x} 0V12" stroke="#222"/>`;
  s += '<path d="M837-1H1184.500V13H837z" fill="none" stroke="#000" stroke-width="2"/>';
  document.getElementById('overview').innerHTML = s;
}

// Bar ruler
{
  let ticks = '', text = '';
  for (let k = 0; k <= 18; k++) {
    const x = Math.round(START + k * BAR);
    ticks += `<path d="M${x + .5} 26V21.500h2" fill="none" stroke="#888"/><path d="M${x + 32.500} 24v2" stroke="#777"/>`;
    text += `<span style="left:${(x / WIDTH * 100).toFixed(2)}%">${46 + k}</span>`;
  }
  document.getElementById('bars').innerHTML = `<svg viewBox="0 0 ${WIDTH} 26" preserveAspectRatio="none">${ticks}</svg>${text}`;
}

// Time ruler
{
  let ticks = '<path d="M21 4l4-4 4 4z" fill="#6fdff0"/>', text = '';
  for (let k = 0; k < 17; k++) {
    const x = Math.round(35 + k * 69.2);
    ticks += `<path d="M${x + .5} 0v7h2" fill="none" stroke="#999"/>`;
    for (const m of [17.500, 34.500, 51.500]) ticks += `<path d="M${x + m} 0v2" stroke="#999"/>`;
    text += `<span style="left:${(x / WIDTH * 100).toFixed(2)}%">1:${24 + 2 * k}</span>`;
  }
  document.getElementById('times').innerHTML = `<svg viewBox="0 0 ${WIDTH} 16" preserveAspectRatio="none">${ticks}</svg>${text}`;
}

// Loop brace and locators
document.getElementById('scrub').innerHTML = empty(24) +
  '<path d="M25.500 1H1183.500V10.500H25.500z" fill="#949494" stroke="#222"/>' +
  '<path d="M26 1.500l8 4.500-8 4.500zM1183 1.500l-8 4.500 8 4.500z" fill="#949494" stroke="#111"/>' +
  '<path d="M218.500 13.500l8 5-8 5z" fill="#ddd" stroke="#111"/>';

// Knobs
document.querySelectorAll('.knob').forEach(el => {
  const { label, value } = el.dataset, angle = +el.dataset.angle;
  const pt = (a, r) => `${(14 + r * Math.sin(a * Math.PI / 180)).toFixed(2)} ${(13 - r * Math.cos(a * Math.PI / 180)).toFixed(2)}`;
  const arc = (a, b, c) => b - a < 1 ? '' : `<path d="M${pt(a, 12)}A12 12 0 ${b - a > 180 ? 1 : 0} 1 ${pt(b, 12)}" fill="none" stroke="${c}" stroke-width="2"/>`;
  const bipolar = el.classList.contains('bipolar');
  const body = bipolar
    ? arc(-145, angle, '#161616') + arc(angle, 0, '#5bd9f5') + arc(0, 145, '#161616') + '<path d="M9.500-5h9L14 1z" fill="#5bd9f5"/>'
    : arc(-145, angle, '#5bd9f5') + arc(angle, 145, '#161616');
  el.innerHTML = `<span>${label}</span><div class="dial"><svg width="28" height="24">${body}<path d="M14 13L${pt(angle, 12)}" stroke="#161616" stroke-width="2"/></svg><input type="range" min="-147" max="147" value="${angle}" aria-label="${label}"></div><span>${value}</span>`;
});

// Impulse response
{
  const mid = 39.500, spikes = { 14: 9, 24: 34, 34: 37, 59: 22, 72: 9, 95: 6, 115: 9, 123: 10, 132: 6, 143: 10, 159: 9, 205: 6, 212: 6, 249: 6, 338: 4, 378: 3 };
  let bright = '', dull = '';
  for (let x = 0; x < 503; x++) {
    const base = x < 10 ? .5 + x * .2 : x < 60 ? 1.500 + 7 * noise(x) : Math.max(.9, (5 - x / 80) * (.3 + noise(x)));
    bright += `M${x + .5} ${mid - base}V${mid + base}`;
    for (const o of [-1, 0, 1]) if (spikes[x + o]) {
      const a = spikes[x + o] * (o ? .5 : 1);
      const line = `M${x + .5} ${mid - a}V${mid + a * .9}`;
      if ([24, 159, 249, 14].includes(x + o)) dull += line; else bright += line;
    }
  }
  document.getElementById('impulse').innerHTML = `<path d="${dull}" stroke="#8f6614"/><path d="${bright}" stroke="#fbab17"/>`;
}

// EQ display
{
  const fx = f => 113 + 111 * Math.log10(f / 100);
  let s = '';
  for (const dec of [10, 100, 1000, 10000]) for (let m = 1; m < 10; m++) {
    const x = Math.round(fx(dec * m)) + .5;
    if (x > 30 && x < 375) s += `<path d="M${x} 0V134" stroke="${m === 1 ? '#666' : '#333'}"/>`;
  }
  [[13, 12], [40, 6], [67, 0], [94, -6], [121, -12]].forEach(([y, db]) => {
    s += `<path d="M22 ${y + .5}H375" stroke="${db ? '#3c3c3c' : '#777'}"/><text x="19" y="${y + 4}" text-anchor="end" fill="#8a8a8a">${db}</text>`;
  });
  const spectrum = '54 134 57 126 62 116 67 113 72 116 76 124 80 130 85 118 89 111 93 113 96 123 101 130 106 121 111 122 116 116 119 114 121 119 124 116 127 119 131 117 136 105 137 109 140 121 142 89 146 67 148 89 152 88 155 66 158 40 160 63 163 60 166 93 169 96 172 103 176 101 177 122 179 88 182 109 184 99 186 93 189 73 191 50 193 73 197 66 199 76 202 106 203 112 206 66 208 76 211 40 214 76 217 111 220 83 222 109 224 66 226 109 232 112 235 59 237 86 241 112 243 103 246 69 248 109 251 93 253 79 255 109 257 86 259 83 261 119 264 99 266 116 269 103 271 128 274 116 277 126 279 116 282 96 285 89 287 91 290 83 292 76 293 89 295 79 297 94 300 103 303 96 306 106 309 109 312 113 315 108 317 116 321 111 324 114 326 96 328 118 331 99 333 109 336 103 339 114 342 123 346 119 349 126 352 129 355 134';
  s += `<polygon points="${spectrum}" fill="#8a8a8a" opacity=".7"/>`;
  for (const [x, t] of [[112, '100'], [223, '1k'], [335, '10k']]) s += `<text x="${x}" y="132" text-anchor="middle" fill="#a8a8a8">${t}</text>`;
  s += '<path d="M84 134C94 118 104 101 113 93S128 80 140 79.500S170 78 180 76S215 69 229 68.500S253 67 262 65S278 55 286 50S304 37 326 36.500H375" fill="none" stroke="#62dcf2" stroke-width="1.600"/>';
  for (const [n, x, y] of [[1, 127, 78], [2, 155, 79], [3, 223, 66], [4, 286, 39]])
    s += `<circle cx="${x}" cy="${y}" r="6" fill="${n === 2 ? '#fdb011' : 'none'}" stroke="#fdb011" stroke-width="1.400"/><text x="${x}" y="${y + 3}" text-anchor="middle" font-size="8" font-weight="700" fill="${n === 2 ? '#3a2800' : '#fdb011'}">${n}</text>`;
  document.getElementById('eq').innerHTML = s;
}

// EQ bands
{
  const bell = 'M0 5h4M14 5h4M4 5l3-4h4l3 4-3 4H7z';
  const shapes = ['M0 9V6q0-4 4-4h14', bell, bell, 'M0 5h7M18 1h-6q-3 0-5 4q2 4 5 4h6', bell, bell, bell, 'M0 2h11q5 0 5 4v3'];
  document.getElementById('bands').innerHTML = shapes.map((d, k) =>
    `<div class="band${k === 1 ? ' sel' : ''}${k > 3 ? ' off' : ''}"><button aria-label="Filter type ${k + 1}"><svg class="line" width="18" height="10"><path d="${d}"/></svg><i class="caret"></i></button><label><input type="checkbox"${k < 4 ? ' checked' : ''}>${k + 1}</label></div>`).join('');
}

// Clip overview
{
  let d = '';
  for (let x = 22; x < 196; x++) {
    const loud = x > 120 && x < 134 ? 4.500 : x > 90 && x < 104 ? 3.500 : 2.6;
    const a = .3 + loud * Math.pow(Math.abs(Math.sin(x / 5.500)), .7) * (.5 + .5 * noise(x));
    d += `M${x + .5} ${8.500 - a}V${8.500 + a}`;
  }
  document.getElementById('clipview').innerHTML = `<path d="M21 0h10v17H21z" fill="#b0b0b0"/><path d="M1 8.500H201" stroke="#222"/><path d="${d}" stroke="#1c1c1c"/>`;
}
```
